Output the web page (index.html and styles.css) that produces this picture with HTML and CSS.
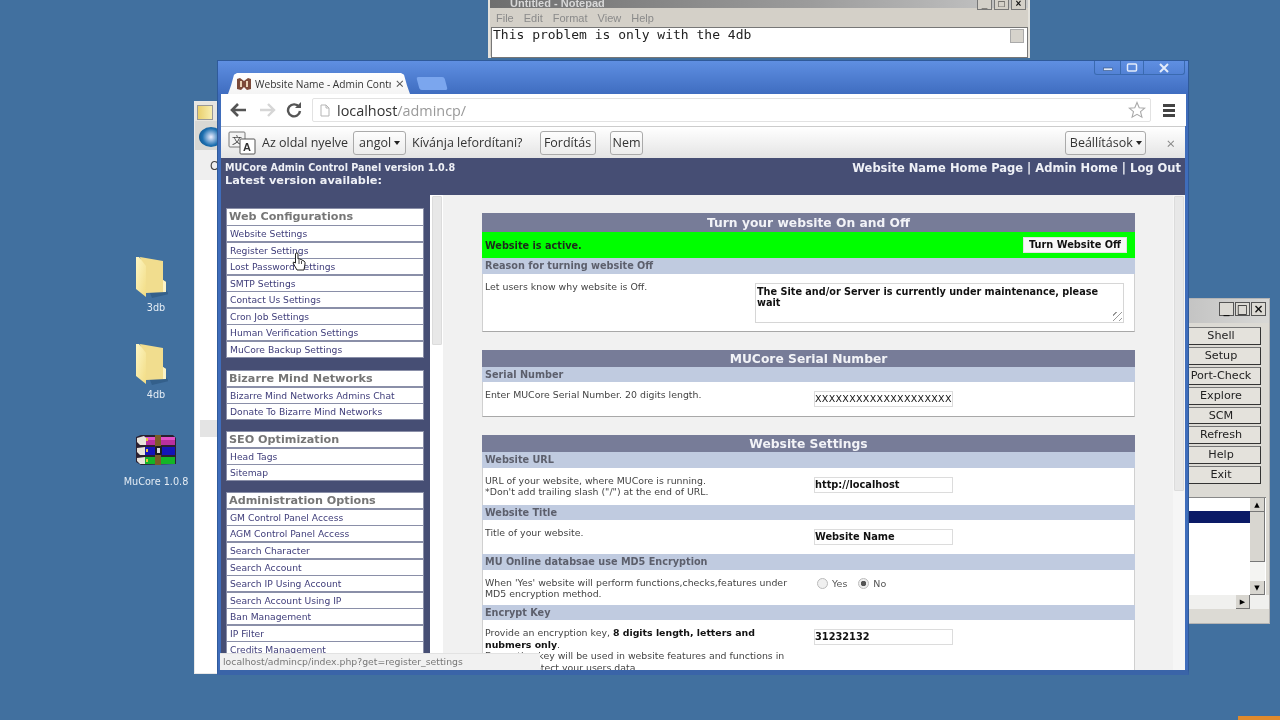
FILE: index.html
```html
<!DOCTYPE html>
<html lang="en">
<head>
    <meta charset="UTF-8">
    <title>Website Name - Admin Control Panel</title>
    <link rel="stylesheet" href="styles.css">
</head>
<body>
<div class="desktop">

    <!-- desktop icons -->
    <div class="desk-icon icon-3db">
        <svg width="32" height="44" viewBox="0 0 32 44"><use href="#folder"/></svg>
        <span>3db</span>
    </div>
    <div class="desk-icon icon-4db">
        <svg width="32" height="44" viewBox="0 0 32 44"><use href="#folder"/></svg>
        <span>4db</span>
    </div>
    <div class="desk-icon icon-rar">
        <svg width="42" height="32" viewBox="0 0 42 32">
            <path d="M1 3 L6 1 L38 1 L41 4 L41 30 L6 31 L1 28Z" fill="#2a2030"/>
            <path d="M9 3 L40 3 L40 11 L10 11Z" fill="#b8309f"/>
            <path d="M9 3 L40 3 L40 6 L9 6Z" fill="#e050c8"/>
            <path d="M2 4 L9 2 L11 4 L11 11 L5 11 L2 8Z" fill="#e8e4dc"/>
            <path d="M10 13 L40 13 L40 21 L10 21Z" fill="#1414b8"/>
            <path d="M2 14 L10 13 L10 21 L5 21 L2 18Z" fill="#e8e4dc"/>
            <path d="M10 23 L40 23 L40 30 L10 30Z" fill="#14b526"/>
            <path d="M2 24 L10 23 L10 30 L5 30 L2 27Z" fill="#e8e4dc"/>
            <path d="M11 4 h2 v3 h-2Z M11 15 h2 v3 h-2Z M11 25 h2 v3 h-2Z" fill="#e6c23c"/>
            <rect x="20" y="1" width="6" height="30" fill="#7a5c28"/>
            <rect x="20" y="12" width="7" height="9" rx="1" fill="#1c1c1c"/>
            <rect x="22" y="14" width="3" height="5" fill="#d8d8d8"/>
        </svg>
        <span>MuCore 1.0.8</span>
    </div>

    <svg class="defs" width="0" height="0">
        <defs>
            <linearGradient id="leaf" x1="0" y1="0" x2="1" y2="1">
                <stop offset="0" stop-color="#fdf6c4"/>
                <stop offset="1" stop-color="#f2dc84"/>
            </linearGradient>
            <g id="folder">
                <path d="M14 36 L30 33 L33 37 L16 41Z" fill="#2c557f" opacity=".6"/>
                <path d="M4 0 L27 4 L27 23 L30 25 L30 35 L10 36Z" fill="#f1dd8e"/>
                <path d="M27 23 L30 25 L30 35 L27 35Z" fill="#fbf3c6"/>
                <path d="M0 0 L3 0 L10 9 L10 40 L0 32Z" fill="url(#leaf)"/>
            </g>
        </defs>
    </svg>

    <!-- notepad behind the browser -->
    <div class="window notepad">
        <div class="np-title">
            <span class="np-name">Untitled - Notepad</span>
            <span class="np-btns"><i>_</i><i>□</i><i>×</i></span>
        </div>
        <div class="np-menu"><span>File</span><span>Edit</span><span>Format</span><span>View</span><span>Help</span></div>
        <div class="np-text">This problem is only with the 4db<span class="np-scroll"></span></div>
    </div>

    <!-- explorer window, mostly hidden -->
    <div class="window explorer">
        <div class="ex-top"><span class="ex-folder"></span></div>
        <div class="ex-tools"><span class="ex-back"></span></div>
        <div class="ex-bar">C</div>
        <div class="ex-body"><span class="ex-strip"></span></div>
    </div>

    <!-- small tool window on the right -->
    <div class="window tool">
        <div class="tool-title"><span class="tool-btns"><i>_</i><i>□</i><i>×</i></span></div>
        <div class="tool-buttons">
            <div class="tool-btn">Shell</div>
            <div class="tool-btn">Setup</div>
            <div class="tool-btn">Port-Check</div>
            <div class="tool-btn">Explore</div>
            <div class="tool-btn">SCM</div>
            <div class="tool-btn">Refresh</div>
            <div class="tool-btn">Help</div>
            <div class="tool-btn">Exit</div>
        </div>
        <div class="tool-list">
            <div class="tool-sel"></div>
            <div class="tool-vbar"><b>▲</b><u></u><b>▼</b></div>
        </div>
        <div class="tool-foot"><b>▶</b></div>
    </div>

    <!-- browser -->
    <div class="window browser">
        <div class="titlebar">
            <div class="tab">
                <svg class="favicon" width="16" height="14" viewBox="0 0 16 14">
                    <path d="M1 2 L4 1 L8 4 L12 1 L15 2 L15 12 L11 13 L8 10 L5 13 L1 12Z" fill="#7b4a3a"/>
                    <path d="M4 4 L6 4 L6 10 L4 10Z M10 4 L12 4 L12 10 L10 10Z" fill="#e9d4b8"/>
                </svg>
                <span class="tab-name">Website Name - Admin Contr</span>
                <span class="tab-close">×</span>
            </div>
            <div class="new-tab"></div>
            <div class="win-btns">
                <span class="wb"><svg width="12" height="8" viewBox="0 0 12 8"><rect x="1.500" y="4" width="9" height="2.500" fill="#dfe8f8" stroke="#33527f" stroke-width=".6"/></svg></span>
                <span class="wb wb-r"><svg width="12" height="10" viewBox="0 0 12 10"><rect x="1.500" y="1" width="9" height="7" rx="1" fill="none" stroke="#e4ecfa" stroke-width="1.500"/></svg></span>
                <span class="wb wb-x"><svg width="12" height="10" viewBox="0 0 12 10"><path d="M2 1 L10 9 M10 1 L2 9" stroke="#e4ecfa" stroke-width="2"/></svg></span>
            </div>
        </div>

        <div class="toolbar">
            <svg class="nav" width="18" height="16" viewBox="0 0 18 16"><path d="M8 2 L2 8 L8 14 M2 8 L16 8" fill="none" stroke="#555" stroke-width="2.600"/></svg>
            <svg class="nav" width="18" height="16" viewBox="0 0 18 16"><path d="M10 2 L16 8 L10 14 M16 8 L2 8" fill="none" stroke="#d6d6d6" stroke-width="2.400"/></svg>
            <svg class="nav" width="16" height="16" viewBox="0 0 16 16"><path d="M13 5 A6 6 0 1 0 14 9" fill="none" stroke="#555" stroke-width="2.400"/><path d="M9 6 L15 6 L15 0Z" fill="#555"/></svg>
            <div class="omnibox">
                <svg width="10" height="13" viewBox="0 0 10 13"><path d="M1 1 L6 1 L9 4 L9 12 L1 12Z M6 1 L6 4 L9 4" fill="#fff" stroke="#b5b5b5"/></svg>
                <span class="url">localhost<em>/admincp/</em></span>
                <svg class="star" width="18" height="18" viewBox="0 0 18 18"><path d="M9 1.500 L11.200 6.700 L16.800 7.100 L12.500 10.700 L13.900 16.200 L9 13.300 L4.100 16.200 L5.500 10.700 L1.200 7.100 L6.800 6.700Z" fill="#fff" stroke="#a9a9a9" stroke-width="1.100"/></svg>
            </div>
            <div class="menu-bars"><i></i><i></i><i></i></div>
        </div>

        <div class="infobar">
            <svg class="translate" width="28" height="24" viewBox="0 0 28 24">
                <rect x="1" y="1" width="16" height="15" rx="1" fill="#f3f3f3" stroke="#777"/>
                <text x="4" y="13" class="tr-a">文</text>
                <rect x="12" y="8" width="15" height="15" rx="1" fill="#fff" stroke="#555"/>
                <text x="15" y="20" class="tr-b">A</text>
            </svg>
            <span>Az oldal nyelve</span>
            <span class="ib-btn ib-lang">angol <i class="caret"></i></span>
            <span>Kívánja lefordítani?</span>
            <span class="ib-btn ib-do">Fordítás</span>
            <span class="ib-btn ib-no">Nem</span>
            <span class="ib-btn ib-set">Beállítások <i class="caret"></i></span>
            <span class="ib-close">×</span>
        </div>

        <div class="page">
            <div class="page-head">
                <div>
                    <div class="head-ver">MUCore Admin Control Panel version 1.0.8</div>
                    <div class="head-latest">Latest version available:</div>
                </div>
                <div class="head-links">Website Name Home Page | Admin Home | Log Out</div>
            </div>
            <div class="page-body">
                <div class="sidebar">
                    <div class="side-block first">
                        <h3>Web Configurations</h3>
                        <a>Website Settings</a>
                        <a>Register Settings</a>
                        <a>Lost Password Settings</a>
                        <a>SMTP Settings</a>
                        <a>Contact Us Settings</a>
                        <a>Cron Job Settings</a>
                        <a>Human Verification Settings</a>
                        <a>MuCore Backup Settings</a>
                    </div>
                    <div class="side-block">
                        <h3>Bizarre Mind Networks</h3>
                        <a>Bizarre Mind Networks Admins Chat</a>
                        <a>Donate To Bizarre Mind Networks</a>
                    </div>
                    <div class="side-block">
                        <h3>SEO Optimization</h3>
                        <a>Head Tags</a>
                        <a>Sitemap</a>
                    </div>
                    <div class="side-block">
                        <h3>Administration Options</h3>
                        <a>GM Control Panel Access</a>
                        <a>AGM Control Panel Access</a>
                        <a>Search Character</a>
                        <a>Search Account</a>
                        <a>Search IP Using Account</a>
                        <a>Search Account Using IP</a>
                        <a>Ban Management</a>
                        <a>IP Filter</a>
                        <a>Credits Management</a>
                    </div>
                </div>
                <div class="side-scroll"><div class="thumb"></div></div>
                <div class="content">
                    <div class="panel">
                        <div class="panel-title first">Turn your website On and Off</div>
                        <div class="active-row">
                            <span>Website is active.</span>
                            <span class="off-btn">Turn Website Off</span>
                        </div>
                        <div class="sub">Reason for turning website Off</div>
                        <div class="field field-area">
                            <div class="field-text narrow">Let users know why website is Off.</div>
                            <div class="textarea">The Site and/or Server is currently under maintenance, please wait<span class="grip"></span></div>
                        </div>
                    </div>
                    <div class="panel">
                        <div class="panel-title">MUCore Serial Number</div>
                        <div class="sub">Serial Number</div>
                        <div class="field">
                            <div class="field-text">Enter MUCore Serial Number. 20 digits length.</div>
                            <div class="input plain">XXXXXXXXXXXXXXXXXXXX</div>
                        </div>
                    </div>
                    <div class="panel">
                        <div class="panel-title">Website Settings</div>
                        <div class="sub">Website URL</div>
                        <div class="field tall">
                            <div class="field-text">URL of your website, where MUCore is running.<br>*Don't add trailing slash ("/") at the end of URL.</div>
                            <div class="input">http://localhost</div>
                        </div>
                        <div class="sub">Website Title</div>
                        <div class="field">
                            <div class="field-text">Title of your website.</div>
                            <div class="input">Website Name</div>
                        </div>
                        <div class="sub">MU Online databsae use MD5 Encryption</div>
                        <div class="field mid">
                            <div class="field-text">When 'Yes' website will perform functions,checks,features under MD5 encryption method.</div>
                            <div class="radios">
                                <i class="radio"></i><span>Yes</span>
                                <i class="radio on"></i><span>No</span>
                            </div>
                        </div>
                        <div class="sub">Encrypt Key</div>
                        <div class="field">
                            <div class="field-text">Provide an encryption key, <b>8 digits length, letters and nubmers only</b>.<br>Encryption key will be used in website features and functions in order to protect your users data.</div>
                            <div class="input">31232132</div>
                        </div>
                    </div>
                </div>
                <div class="main-scroll"><div class="thumb"></div></div>
            </div>
            <div class="status">localhost/admincp/index.php?get=register_settings</div>
        </div>
    </div>

    <!-- mouse pointer -->
    <svg class="pointer" width="14" height="19" viewBox="0 0 14 19">
        <path d="M4 1 Q5.500 0 6 2 L6 7 L8 7 L10 8 L12 9 Q13.500 10 13 12 L12 18 L5 18 L1 11 Q1 9 3.500 11 L3.500 2Z" fill="#fff" stroke="#222" stroke-width="1"/>
        <path d="M7 8 V12 M9.500 9 V12" stroke="#222" stroke-width=".8"/>
    </svg>

    <div class="tray-corner"></div>
</div>
</body>
</html>
```

FILE: styles.css
```css
*{box-sizing:border-box}
html,body{margin:0;padding:0}
body{width:1280px;height:720px;overflow:hidden;background:#41709f}
.desktop{position:relative;width:1280px;height:720px;background:#41709f;overflow:hidden;font-family:"DejaVu Sans",Verdana,sans-serif;filter:blur(.35px)}
.defs{position:absolute}
.window{position:absolute}

/* desktop icons */
.desk-icon{position:absolute;width:80px;display:flex;flex-direction:column;align-items:center;color:#e4ecf4;font-size:9.700px}
.icon-3db{left:116px;top:257px}
.icon-4db{left:116px;top:344px}
.icon-rar{left:116px;top:434px}
.icon-3db svg,.icon-4db svg{margin-right:8px}
.icon-3db span,.icon-4db span{margin-top:1px}
.icon-rar span{margin-top:10px;white-space:nowrap}

/* notepad */
.notepad{left:488px;top:-12px;width:542px;height:70px;background:#d4d0c8;border:2px solid #e4e2dc;border-top:0;font-family:"Liberation Sans",sans-serif}
.np-title{height:20px;background:linear-gradient(90deg,#6e6e6e,#9c9c9c 60%,#c8c8c8);display:flex;justify-content:space-between;padding:9px 2px 0 20px;color:#d8d8d8;font-size:11px;font-weight:bold}
.np-btns i{display:inline-block;width:15px;height:13px;margin-left:2px;background:#d4d0c8;color:#111;font-style:normal;font-size:10px;line-height:11px;text-align:center;border:1px solid #777}
.np-menu{height:19px;display:flex;gap:10px;padding:4px 6px 0;font-size:11px;color:#8a8a8a}
.np-text{position:relative;height:31px;margin:0 0 0 1px;background:#fff;border:1px solid #777;padding:0 1px;font-family:"DejaVu Sans Mono",monospace;font-size:13px;line-height:13px;color:#222}
.np-scroll{position:absolute;right:3px;top:1px;width:14px;height:14px;background:#d6d3cc;border:1px solid #aaa}

/* explorer */
.explorer{left:194px;top:101px;width:100px;height:573px;background:#fff;border:1px solid #e8e8e8;font-family:"Liberation Sans",sans-serif}
.ex-top{height:19px;background:#e8e6e0;padding:3px 2px}
.ex-folder{display:block;width:16px;height:15px;background:linear-gradient(90deg,#e9cf6c,#f8eeb0);border:1px solid #999}
.ex-tools{height:29px;background:#d8d8d4;padding:6px 4px;overflow:hidden}
.ex-back{display:block;width:24px;height:20px;border-radius:50%;background:radial-gradient(circle,#eef,#1c6fb0 55%,#0c4474)}
.ex-bar{height:30px;background:#efefef;color:#444;font-size:12px;padding:9px 15px}
.ex-body{height:490px;background:#fff;padding:240px 5px 0}
.ex-strip{display:block;height:17px;background:#e4e4e4}

/* tool window */
.tool{left:1140px;top:298px;width:130px;height:326px;background:#dcdad4;border:1px solid #b4b4b4;border-left:0;font-family:"DejaVu Sans",sans-serif}
.tool-title{height:24px;background:linear-gradient(90deg,#b8b8b8,#d8d8d6);padding:3px 3px 0 0;text-align:right}
.tool-btns i{display:inline-block;width:15px;height:14px;margin-left:1px;background:#dcdad4;color:#111;font-style:normal;font-size:12px;font-weight:bold;line-height:12px;text-align:center;border:1px solid #555;vertical-align:top}
.tool-buttons{margin-top:4px;padding-right:8px;display:flex;flex-direction:column;gap:2px}
.tool-btn{height:17.900px;background:#e4e2dc;border:1px solid #333;border-top-color:#777;border-left:0;font-size:11.200px;line-height:16px;text-align:center;color:#222;padding-left:42px;white-space:nowrap}
.tool-list{position:relative;height:98px;margin-top:13px;margin-right:3px;background:#fff;border-top:1px solid #888}
.tool-sel{position:absolute;left:0;right:16px;top:13px;height:12px;background:#0b1a66}
.tool-vbar{position:absolute;right:1px;top:0;bottom:0;width:15px;display:flex;flex-direction:column;justify-content:space-between;background:#f4f4f2;font-weight:normal}
.tool-vbar b,.tool-foot b{display:block;height:14px;font-size:7px;line-height:14px;text-align:center;background:#d8d6d0;border-bottom:1px solid #777;border-right:1px solid #777}
.tool-vbar u{display:block;height:50px;background:#d8d6d0;border-bottom:1px solid #777;border-right:1px solid #777;margin-bottom:auto}
.tool-foot{height:14px;background:#f0f0ee;display:flex;justify-content:flex-end;padding-right:19px}
.tool-foot b{width:14px}

/* browser frame */
.browser{left:217px;top:60px;width:972px;height:615px;background:#3f6dbb;border:1px solid #2f5a9a;border-bottom:5px solid #3a64a8;padding:0 3px 0 3px;display:flex;flex-direction:column;font-family:"Open Sans",sans-serif;color:#333}
.titlebar{height:33px;margin:0 -3px;padding:12px 0 0 10px;background:linear-gradient(#5f8fe2,#3f6dc0);display:flex;align-items:flex-end;position:relative}
.tab{width:182px;height:21px;background:linear-gradient(#fff,#f4f4f4);clip-path:polygon(0 100%,3px 60%,6px 8%,9px 0,calc(100% - 9px) 0,calc(100% - 6px) 8%,calc(100% - 3px) 60%,100% 100%);display:flex;align-items:center;padding:0 3px 0 8px;font-size:10.200px;color:#333}
.favicon{flex:none;margin-right:3px}
.tab-name{flex:1;white-space:nowrap;overflow:hidden}
.tab-close{font-size:15px;line-height:15px;color:#555;margin-left:4px;padding-right:3px}
.new-tab{width:28px;height:13px;margin:0 0 4px 8px;background:#7ba6ee;transform:skewX(15deg);border-radius:2px}
.win-btns{position:absolute;right:3px;top:0;display:flex;height:14px;border:1px solid #3a6ab0;border-top:0;border-radius:0 0 3px 3px}
.wb{width:25px;display:flex;align-items:center;justify-content:center;border-left:1px solid #3a6ab0}
.wb:first-child{border-left:0}
.wb-r{width:23px}
.wb-x{width:41px}

.toolbar{height:32px;background:#fff;display:flex;align-items:center;padding:0 11px 0 9px;gap:10px;margin-right:-1px}
.nav{flex:none}
.omnibox{flex:1;height:24px;margin-right:2px;border:1px solid #e2e2e2;border-radius:2px;display:flex;align-items:center;padding:0 4px 0 7px;gap:7px}
.url{flex:1;font-size:14.400px;color:#333}
.url em{font-style:normal;color:#999}
.menu-bars{display:flex;flex-direction:column;gap:2px;width:12px}
.menu-bars i{display:block;height:3px;background:#444}

.infobar{height:32px;background:linear-gradient(#fff,#e4e4e4);border-top:1px solid #ccc;display:flex;align-items:center;padding:0 10px 0 7px;font-size:12.500px;color:#333;white-space:nowrap;position:relative}
.translate{flex:none;margin-right:6px}
.tr-a{font-family:"Noto Sans CJK SC",sans-serif;font-size:10px;fill:#444}
.tr-b{font-family:"Liberation Sans",sans-serif;font-size:11px;font-weight:bold;fill:#333}
.ib-btn{height:24px;line-height:22px;padding:0 2px;border:1px solid #aaa;border-radius:3px;background:linear-gradient(#fdfdfd,#ececec)}
.ib-lang{width:53px;margin:0 6px 0 5px;padding-left:5px}
.ib-do{width:56px;margin-left:17px;text-align:center}
.ib-no{width:33px;margin-left:14px;text-align:center}
.ib-set{width:81px;margin-left:auto;margin-right:20px;text-align:center}
.ib-close{font-size:15px;color:#888}
.caret{display:inline-block;width:0;height:0;border:3.500px solid transparent;border-top:4px solid #222;border-bottom:0;vertical-align:2px}

/* page */
.page{flex:1;min-height:0;position:relative;display:flex;flex-direction:column;font-family:"DejaVu Sans",Verdana,sans-serif;background:#fff}
.page-head{height:37px;flex:none;background:#464e74;color:#eef0f6;display:flex;justify-content:space-between;padding:4px 4px 0;font-weight:bold}
.head-ver{font-size:9.600px;line-height:12px}
.head-latest{font-size:11.300px;line-height:13px}
.head-links{font-size:11.500px;line-height:13px}
.page-body{flex:1;min-height:0;display:flex;overflow:hidden}

.sidebar{width:209px;flex:none;background:#464e74;padding:13px 6px 0 5px}
.side-block{background:#8a8fa8;padding:1px;margin-bottom:10.500px}
.side-block.first{margin-bottom:12px}
.side-block h3{margin:0 0 1.500px;height:15.500px;background:#fff;color:#767676;font-size:11.200px;line-height:16px;padding-left:2px;font-weight:bold}
.side-block a{display:block;height:15px;margin-bottom:1.550px;background:#fff;color:#3f3d7a;font-size:9.200px;line-height:15.500px;padding-left:3px;white-space:nowrap}
.side-block a:last-child{margin-bottom:0}

.side-scroll{width:13px;flex:none;background:#fff;padding:1px 1px 0 2px}
.thumb{background:#e8e8e8;border:1px solid #dcdcdc;border-radius:1px}
.side-scroll .thumb{height:149px}
.main-scroll{width:12px;flex:none;background:#f6f6f6}
.main-scroll .thumb{height:295px;margin:1px}

.content{flex:1;min-width:0;background:#f1f1f1;padding:18px 38px 0 39px;overflow:hidden}
.panel{background:#fff;border:1px solid #d0d0d0;border-top:0;border-bottom:1px solid #a8a8a8;margin-bottom:18px}
.panel-title{height:17px;margin:0 -1px;background:#777c98;color:#f2f3f7;font-size:12.300px;font-weight:bold;line-height:18px;text-align:center}
.panel-title.first{height:19px;line-height:20px}
.active-row{height:26px;margin:0 -1px;background:#00ff00;display:flex;justify-content:space-between;align-items:center;padding:0 8px 0 3px;color:#1c2c1c;font-size:9.700px;font-weight:bold}
.off-btn{width:104px;height:16px;background:#f8f8f8;border:1px solid #e2e2e2;color:#111;font-size:9.800px;line-height:14px;text-align:center}
.sub{height:15.500px;margin:0 -1px;background:#c0cbe0;color:#5c5f6c;font-size:9.700px;font-weight:bold;line-height:16px;padding-left:3px}
.field{display:flex;min-height:34px;padding:7px 0 0 2px;font-size:9.400px;line-height:11.700px;color:#444}
.field-text{width:329px;padding-right:26px;flex:none}
.field-text.narrow{width:270px}
.field-area{height:57px}
.field.tall{min-height:37px}
.field.mid{min-height:35px}
.field-text b{color:#111}
.input{width:139px;height:16px;margin-top:2px;background:#fff;border:1px solid #dcdcdc;padding-left:0;color:#111;font-size:9.800px;font-weight:bold;line-height:14px;white-space:nowrap;overflow:hidden}
.input.plain{font-weight:normal;font-size:9.500px;letter-spacing:.33px}
.textarea{position:relative;width:369px;height:40px;margin-top:2px;border:1px solid #d6d6d6;padding:2px 12px 0 1px;color:#111;font-weight:bold;font-size:9.700px;line-height:11px}
.grip{position:absolute;right:1px;bottom:1px;width:9px;height:9px;background:repeating-linear-gradient(135deg,transparent 0 2px,#999 2px 3px,transparent 3px 4px)}
.radios{display:flex;align-items:center;height:14px;margin-top:0;color:#555;font-size:9.500px}
.radios span{margin:0 8px 0 4px}
.radio{width:11px;height:11px;border-radius:50%;background:#f0f0f0;border:1px solid #bbb;display:block;margin-left:3px}
.radio.on{background:radial-gradient(circle,#555 0 2.500px,#eee 3px)}

.status{position:absolute;left:-1px;bottom:0;height:17px;width:320px;background:#f1f1f1;color:#777;font-size:9.300px;line-height:16px;padding-left:3px;border-top:1px solid #e2e2e2;white-space:nowrap;overflow:hidden}

.star{flex:none}
.pointer{position:absolute;left:292px;top:252px}
.tray-corner{position:absolute;right:0;bottom:0;width:42px;height:4px;background:#e08a2c}
```
